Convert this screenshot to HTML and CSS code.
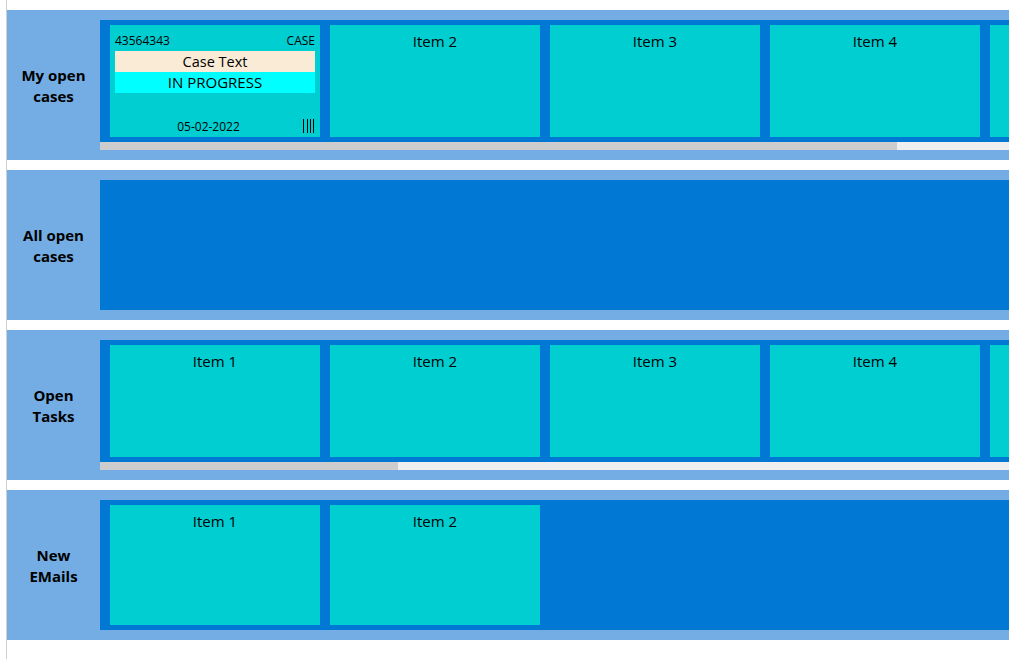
FILE: index.html
```html
<!DOCTYPE html>
<html lang="en">
<head>
<meta charset="utf-8">
<title>Dashboard</title>
<link rel="stylesheet" href="styles.css">
</head>
<body>
<div class="page">
  <section class="group">
    <div class="group-label">My open cases</div>
    <div class="lane">
      <div class="lane-items">
        <div class="card case-card">
          <div class="case-top"><span>43564343</span><span>CASE</span></div>
          <div class="case-text">Case Text</div>
          <div class="case-status">IN PROGRESS</div>
          <div class="case-bottom">
            <span class="case-date">05-02-2022</span>
            <svg class="barcode" width="12" height="14" viewBox="0 0 12 14"><path d="M1.5 0V14M5.5 0V14M8.5 0V14M11.5 0V14" stroke="#000" stroke-width="1"/></svg>
          </div>
        </div>
        <div class="card">Item 2</div>
        <div class="card">Item 3</div>
        <div class="card">Item 4</div>
        <div class="card"></div>
      </div>
      <div class="scrollbar"><div class="thumb" style="width:797px"></div></div>
    </div>
  </section>
  <section class="group">
    <div class="group-label">All open cases</div>
    <div class="lane">
      <div class="lane-items"></div>
    </div>
  </section>
  <section class="group">
    <div class="group-label">Open Tasks</div>
    <div class="lane">
      <div class="lane-items">
        <div class="card">Item 1</div>
        <div class="card">Item 2</div>
        <div class="card">Item 3</div>
        <div class="card">Item 4</div>
        <div class="card"></div>
      </div>
      <div class="scrollbar"><div class="thumb" style="width:298px"></div></div>
    </div>
  </section>
  <section class="group">
    <div class="group-label">New EMails</div>
    <div class="lane">
      <div class="lane-items">
        <div class="card">Item 1</div>
        <div class="card">Item 2</div>
      </div>
    </div>
  </section>
</div>
</body>
</html>
```
FILE: styles.css
```css
* { box-sizing: border-box; }
html, body {
  margin: 0;
  padding: 0;
  background: #ffffff;
  overflow: hidden;
}
body {
  font-family: "Open Sans", "Noto Sans", "Liberation Sans", sans-serif;
  color: #000;
}
.page {
  margin-left: 6px;
  border-left: 1px solid #d0d0d0;
  min-height: 100vh;
  padding-top: 10px;
  display: flex;
  flex-direction: column;
  gap: 10px;
}
.group {
  display: flex;
  height: 150px;
  padding: 10px 0;
  background: #73ade3;
}
.group-label {
  width: 93px;
  flex: none;
  display: flex;
  align-items: center;
  justify-content: center;
  text-align: center;
  font-weight: 700;
  font-size: 15px;
  line-height: 21px;
  padding: 2px 8px 0;
}
.lane {
  flex: 1;
  min-width: 0;
  height: 130px;
  display: flex;
  flex-direction: column;
}
.lane-items {
  flex: 1;
  min-height: 0;
  display: flex;
  gap: 10px;
  padding: 5px 10px;
  background: #0078d4;
  overflow: hidden;
}
.card {
  flex: none;
  width: 210px;
  background: #00ced1;
  text-align: center;
  font-size: 15px;
  line-height: 20px;
  padding-top: 6px;
}
.case-card {
  padding: 5px;
  display: flex;
  flex-direction: column;
  text-align: left;
}
.case-top {
  display: flex;
  justify-content: space-between;
  font-size: 12px;
  line-height: 21px;
}
.case-text {
  background: #faebd7;
  text-align: center;
  font-size: 14.5px;
  line-height: 21px;
}
.case-status {
  background: #00ffff;
  text-align: center;
  font-size: 15px;
  line-height: 21px;
}
.case-bottom {
  margin-top: auto;
  display: flex;
  align-items: center;
  height: 14px;
  margin-bottom: -1px;
}
.case-date {
  flex: 1;
  text-align: center;
  font-size: 12px;
  line-height: 14px;
  padding-top: 1px;
}
.barcode {
  display: block;
  flex: none;
  margin-right: 1px;
  margin-top: -1px;
}
.scrollbar {
  flex: none;
  height: 8px;
  background: #efefef;
}
.thumb {
  height: 100%;
  background: #cdcdcd;
}
```
